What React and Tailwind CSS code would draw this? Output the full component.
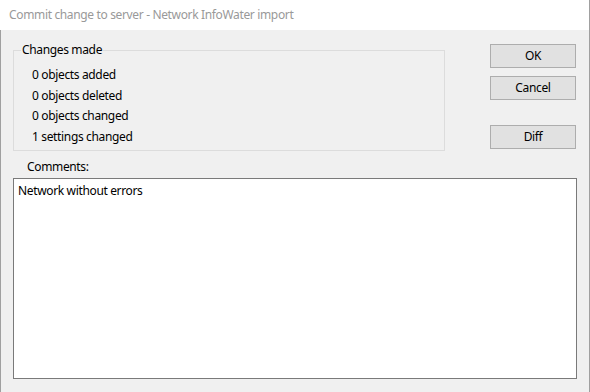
function WinButton({ children, className = "" }) {
  return (
    <button
      className={
        "w-[86px] h-[24px] bg-[#e1e1e1] border border-[#adadad] text-[12px] leading-none text-black " +
        className
      }
    >
      {children}
    </button>
  );
}

export default function App() {
  const changes = [
    "0 objects added",
    "0 objects deleted",
    "0 objects changed",
    "1 settings changed",
  ];

  return (
    <div
      className="w-[590px] h-[392px] flex flex-col border-r border-[#a0a0a0] text-[12px] tracking-[-0.35px] text-black overflow-hidden"
      style={{ fontFamily: '"Noto Sans", "Open Sans", sans-serif' }}
    >
      {/* Title bar */}
      <div className="h-[30px] shrink-0 bg-white pl-[9px] leading-[30px] text-[#999999]">
        Commit change to server - Network InfoWater import
      </div>

      {/* Body */}
      <div className="flex-1 bg-[#f0f0f0] border-l border-[#a0a0a0] flex flex-col">
        <div className="flex pl-[12px] pt-[12px]">
          <fieldset className="w-[432px] h-[109px] border border-[#dcdcdc] px-[7px]">
            <legend className="px-[1px] leading-[16px]">Changes made</legend>
            <div className="pl-[11px] pt-[7px]">
              {changes.map((c) => (
                <div key={c} className="leading-[20.5px] h-[20.5px]">
                  {c}
                </div>
              ))}
            </div>
          </fieldset>

          <div className="ml-[45px] pt-[2px] flex flex-col">
            <WinButton>OK</WinButton>
            <WinButton className="mt-[8px]">Cancel</WinButton>
            <WinButton className="mt-[25px]">Diff</WinButton>
          </div>
        </div>

        <div className="pl-[26px] mt-[8px] leading-[16px]">Comments:</div>

        <div className="pl-[12px] mt-[3px]">
          <div className="w-[564px] h-[201px] bg-white border border-[#7a7a7a] pl-[4px] pt-[4px] leading-[16px]">
            Network without errors
          </div>
        </div>
      </div>
    </div>
  );
}
